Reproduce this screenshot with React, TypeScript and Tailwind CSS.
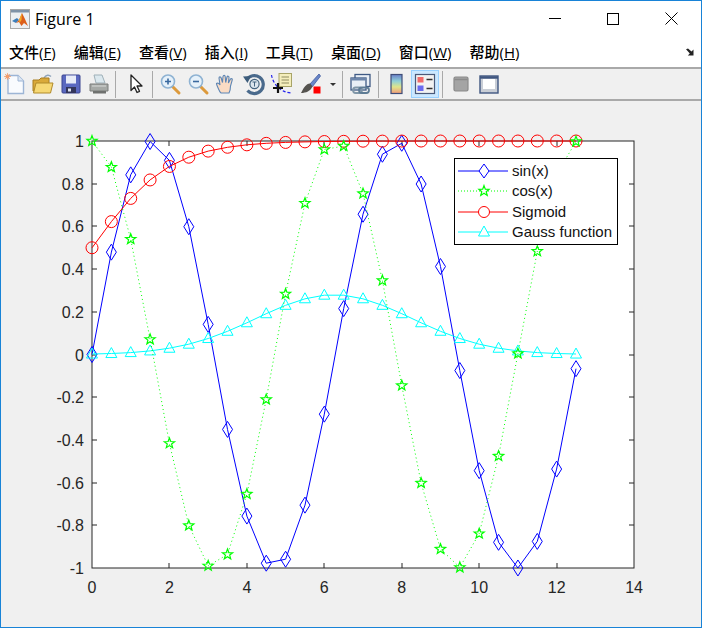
import React from "react";

const xs = Array.from({ length: 26 }, (_, i) => i * 0.5);
const px = (v: number) => 92 + v * 38.72;
const py = (v: number) => 354.5 - v * 213.5;

const series = {
  sin: xs.map((x) => [px(x), py(Math.sin(x))]),
  cos: xs.map((x) => [px(x), py(Math.cos(x))]),
  sigmoid: xs.map((x) => [px(x), py(1 / (1 + Math.exp(-x)))]),
  gauss: xs.map((x) => [px(x), py(0.28 * Math.exp(-((x - 6.25) ** 2) / 8))]),
};

const toLine = (pts: number[][]) => pts.map((p) => p[0].toFixed(1) + "," + p[1].toFixed(1)).join(" ");

const starPoints = (cx: number, cy: number, r = 5.4) =>
  Array.from({ length: 10 }, (_, i) => {
    const a = -Math.PI / 2 + (i * Math.PI) / 5;
    const rr = i % 2 ? r * 0.42 : r;
    return (cx + rr * Math.cos(a)).toFixed(1) + "," + (cy + rr * Math.sin(a)).toFixed(1);
  }).join(" ");

function Diamond({ x, y }: { x: number; y: number }) {
  return <polygon points={`${x},${y - 8} ${x + 5},${y} ${x},${y + 8} ${x - 5},${y}`} fill="none" stroke="#0000ff" strokeWidth="1" />;
}
function Triangle({ x, y }: { x: number; y: number }) {
  return <polygon points={`${x},${y - 6} ${x + 5.5},${y + 4} ${x - 5.5},${y + 4}`} fill="none" stroke="#00ffff" strokeWidth="1" />;
}

const menus: [string, string][] = [
  ["文件", "F"],
  ["编辑", "E"],
  ["查看", "V"],
  ["插入", "I"],
  ["工具", "T"],
  ["桌面", "D"],
  ["窗口", "W"],
  ["帮助", "H"],
];

function Sep() {
  return <div className="w-px h-[27px] bg-[#a9a9a9] mx-[2px]" />;
}

function Btn({ children, active }: { children: React.ReactNode; active?: boolean }) {
  return (
    <div className={"w-[28px] h-[28px] flex items-center justify-center border " + (active ? "bg-[#cce8ff] border-[#99d1ff]" : "border-transparent")}>
      {children}
    </div>
  );
}

function Ico({ children }: { children: React.ReactNode }) {
  return (
    <svg width="24" height="24" viewBox="0 0 24 24">
      {children}
    </svg>
  );
}

function MatlabLogo() {
  return (
    <svg width="20" height="20" viewBox="0 0 20 20">
      <rect x="0.5" y="0.5" width="19" height="19" fill="#eceff2" stroke="#a8a8a8" />
      <rect x="1" y="1" width="18" height="2.5" fill="#7f93a8" />
      <polygon points="2,12 7,9 9,11 6,14" fill="#3c7db8" />
      <polygon points="6,14 9,11 12,4 14.5,9 18,17 14,14 11.5,17 9,13" fill="#dd5f1a" />
      <polygon points="9,11 12,4 11.5,11 9.5,14" fill="#f4ab28" />
    </svg>
  );
}

function Lens({ minus }: { minus?: boolean }) {
  return (
    <Ico>
      <line x1="14" y1="14" x2="21" y2="21" stroke="#dd9a3c" strokeWidth="3" strokeLinecap="round" />
      <circle cx="10" cy="9.5" r="6.5" fill="#e6f1fa" stroke="#8fb3d3" strokeWidth="1.6" />
      <path d={minus ? "M7 9.5h6" : "M7 9.5h6M10 6.5v6"} stroke="#39699f" strokeWidth="1.6" />
    </Ico>
  );
}

export default function App() {
  return (
    <div className="w-[702px] h-[628px] flex flex-col overflow-hidden border border-[#1883d7] bg-white font-['Liberation_Sans',sans-serif]">
      <div className="h-[35px] shrink-0 flex items-center pl-[9px] pr-px">
        <MatlabLogo />
        <span className="ml-[5px] text-[16px] text-black font-['Open_Sans',sans-serif]">Figure 1</span>
        <div className="ml-auto flex items-center h-full">
          <div className="w-[58px] flex justify-center">
            <div className="w-[12px] h-px bg-black" />
          </div>
          <div className="w-[58px] flex justify-center">
            <div className="w-[12px] h-[12px] border border-black" />
          </div>
          <div className="w-[58px] flex justify-center">
            <svg width="13" height="13" viewBox="0 0 13 13">
              <path d="M0.5 0.5L12.5 12.5M12.5 0.5L0.5 12.5" stroke="#000" strokeWidth="1" fill="none" />
            </svg>
          </div>
        </div>
      </div>

      <div className="h-[31px] shrink-0 flex items-center gap-[18px] pt-px pl-[8px] pr-[6px] text-[15px] text-black font-['Open_Sans','Noto_Sans_CJK_SC',sans-serif] font-medium">
        {menus.map(([name, key]) => (
          <span key={key} className="whitespace-nowrap">
            <span className="font-['Noto_Sans_CJK_SC',sans-serif]">{name}</span>(<span className="underline">{key}</span>)
          </span>
        ))}
        <svg className="ml-auto" width="9" height="8" viewBox="0 0 9 8">
          <path d="M0 1.2L2 0.5L5.5 3.5L7.5 1.5V7.5H1.8L3.8 5.5Z" fill="#222" />
        </svg>
      </div>

      <div className="h-[34px] shrink-0 flex items-center bg-[#f0f0f0] border-y-2 border-[#a9a9a9]">
        <Btn>
          <Ico>
            <path d="M5 3.5H15L20.5 9V21.5H5Z" fill="#f9fbfe" stroke="#9db5d5" strokeWidth="1.4" />
            <path d="M15 3.5V9H20.5" fill="#dde7f3" stroke="#9db5d5" />
            <circle cx="4.5" cy="4.5" r="2" fill="#f08a50" />
            <path d="M1 4.5h7M4.5 1v7M2 2l5 5M7 2l-5 5" stroke="#f2a070" strokeWidth="0.8" />
          </Ico>
        </Btn>
        <Btn>
          <Ico>
            <path d="M13 6C15 2.5 18 2.5 20 4.5" stroke="#8fa5bd" strokeWidth="1.5" fill="none" />
            <path d="M2 8H8L10 6H18V19H2Z" fill="#d9a93a" stroke="#a97e20" />
            <path d="M2.5 21L5 11H22L19.5 21Z" fill="#f6d874" stroke="#b08a2a" />
          </Ico>
        </Btn>
        <Btn>
          <Ico>
            <rect x="3" y="3" width="18" height="18" rx="1" fill="#5a68c0" stroke="#3a4590" />
            <rect x="7" y="3.5" width="10" height="8" fill="#e8ecf8" />
            <rect x="7" y="15" width="10" height="6" fill="#33365c" />
            <rect x="9" y="16.5" width="3" height="3" fill="#dfe3f0" />
          </Ico>
        </Btn>
        <Btn>
          <Ico>
            <path d="M7 3H15L18 11H9Z" fill="#dbe8ee" stroke="#9fb0b8" />
            <path d="M3 12H21V19H3Z" fill="#a6a9a6" stroke="#7a7c7a" />
            <path d="M6 19H19V21.5H6Z" fill="#6f716f" />
            <path d="M5 14h14" stroke="#d8dad8" />
          </Ico>
        </Btn>
        <Sep />
        <div className="w-[4px]" />
        <Btn>
          <Ico>
            <path d="M7 3V18.5L10.5 15L13 20.5L15.5 19.3L13 14H18Z" fill="#fff" stroke="#222" strokeWidth="1.3" strokeLinejoin="round" />
          </Ico>
        </Btn>
        <Sep />
        <div className="w-px" />
        <Btn>
          <Lens />
        </Btn>
        <Btn>
          <Lens minus />
        </Btn>
        <Btn>
          <Ico>
            <path
              d="M6 20C4 16 2.5 13 2.5 11.5C3.5 10.5 5 11.5 6 13L5 6C5 4.5 6.8 4.5 7.2 6L8.5 10.5L9 4.5C9.3 3 11 3 11.2 4.5L11.7 10.5L13 5C13.5 3.7 15 4 15 5.5L14.4 11L16.5 7C17.5 6 18.7 7 18.2 8L16.5 14C16.5 17 16 19 15 21H7Z"
              fill="#fbdcc4"
              stroke="#5d86b5"
              strokeWidth="1.1"
            />
          </Ico>
        </Btn>
        <Btn>
          <Ico>
            <path d="M4.5 8A9 9 0 1 1 5.5 18.5" stroke="#4a6a8c" strokeWidth="3.2" fill="none" />
            <path d="M1 4.5L9 4L5.5 11Z" fill="#3d5d7c" />
            <circle cx="12.5" cy="12" r="4.6" fill="#dce6ee" stroke="#44647f" strokeWidth="1.2" />
            <path d="M10.5 10h4M12.5 10v4.5" stroke="#44647f" />
          </Ico>
        </Btn>
        <Btn>
          <Ico>
            <path d="M1.5 3C3 12 10 20 21 21" stroke="#2222ee" strokeWidth="1.2" strokeDasharray="3 2" fill="none" />
            <rect x="9" y="1.5" width="12.5" height="13" fill="#f4eebc" stroke="#a8a468" />
            <path d="M11.5 5h7.5M11.5 8h7.5M11.5 11h7.5" stroke="#8f8c60" />
            <path d="M8 11V21M3 16H13" stroke="#111" strokeWidth="2.2" />
          </Ico>
        </Btn>
        <Btn>
          <Ico>
            <path d="M21 2L12 12L14.5 14.5L22.5 4Z" fill="#6a86c8" stroke="#3f5aa0" strokeWidth="0.8" />
            <path d="M12 11.5C8 12 6 15 3 21C8 21 12.5 19 14.5 14.5Z" fill="#55534f" />
            <rect x="15.5" y="14.5" width="7" height="7" fill="#ff0000" />
          </Ico>
        </Btn>
        <div className="w-[15px] ml-px flex justify-center">
          <div className="w-0 h-0 border-x-[3px] border-x-transparent border-t-[3px] border-t-[#333]" />
        </div>
        <Sep />
        <div className="w-px" />
        <Btn>
          <Ico>
            <rect x="7" y="2.5" width="15" height="12" fill="#e9eff6" stroke="#3f5a85" strokeWidth="1.3" />
            <rect x="3" y="6" width="15" height="12" fill="#e9eff6" stroke="#3f5a85" strokeWidth="1.3" />
            <path d="M3 6h15v2.5h-15z" fill="#6d86ab" />
            <rect x="5" y="15.5" width="9" height="5.5" rx="2.7" fill="none" stroke="#8197a8" strokeWidth="1.8" />
            <rect x="11" y="15.5" width="10" height="5.5" rx="2.7" fill="none" stroke="#5e7c95" strokeWidth="1.8" />
          </Ico>
        </Btn>
        <div className="w-[2px]" />
        <Sep />
        <div className="w-[2px]" />
        <Btn>
          <Ico>
            <defs>
              <linearGradient id="cb" x1="0" y1="0" x2="0" y2="1">
                <stop offset="0" stopColor="#6a7fc8" />
                <stop offset="0.35" stopColor="#8fd0d8" />
                <stop offset="0.65" stopColor="#dfe58a" />
                <stop offset="1" stopColor="#f09a7a" />
              </linearGradient>
            </defs>
            <rect x="6" y="2.5" width="11" height="19" fill="url(#cb)" stroke="#3f4d78" strokeWidth="1.2" />
          </Ico>
        </Btn>
        <Btn active>
          <Ico>
            <rect x="2.5" y="2.5" width="19" height="19" fill="#f2f2f2" stroke="#4a5a7a" strokeWidth="1.2" />
            <rect x="4.5" y="5" width="6" height="5.5" fill="#f06a6a" />
            <rect x="4.5" y="13.5" width="6" height="5.5" fill="#6a6af0" />
            <path d="M13.5 7.5h6M13.5 16.5h6" stroke="#333" strokeWidth="1.4" />
          </Ico>
        </Btn>
        <div className="w-px" />
        <Sep />
        <div className="w-[2px]" />
        <Btn>
          <Ico>
            <rect x="5" y="5" width="14" height="14" rx="1.5" fill="#a4a4a4" stroke="#8a8a8a" strokeWidth="1.2" />
            <path d="M5.5 7.5h13" stroke="#8b8b8b" strokeWidth="1.5" />
          </Ico>
        </Btn>
        <Btn>
          <Ico>
            <rect x="3" y="4" width="18" height="17" fill="#c9ced6" stroke="#3f5680" strokeWidth="1.4" />
            <rect x="6" y="7" width="12" height="10" fill="#fff" />
            <path d="M3 5.5h18" stroke="#3f5680" strokeWidth="2.4" />
          </Ico>
        </Btn>
      </div>

      <div className="relative flex-1 bg-[#f0f0f0]">
        <svg className="block w-full h-full" viewBox="1 101 700 526">
          <rect x="92" y="141" width="542" height="427" fill="#fff" />
          {[2, 4, 6, 8, 10, 12].map((t) => (
            <path key={t} d={`M${px(t).toFixed(0)} 568v-5M${px(t).toFixed(0)} 141v5`} stroke="#262626" />
          ))}
          {[-0.8, -0.6, -0.4, -0.2, 0, 0.2, 0.4, 0.6, 0.8].map((t) => (
            <path key={t} d={`M92 ${py(t).toFixed(0)}h5M634 ${py(t).toFixed(0)}h-5`} stroke="#262626" />
          ))}
          <rect x="92" y="141" width="542" height="427" fill="none" stroke="#262626" />

          <polyline points={toLine(series.sin)} fill="none" stroke="#0000ff" strokeWidth="1" />
          {series.sin.map((p, i) => (
            <Diamond key={i} x={p[0]} y={p[1]} />
          ))}
          <polyline points={toLine(series.sigmoid)} fill="none" stroke="#ff0000" strokeWidth="1" />
          {series.sigmoid.map((p, i) => (
            <circle key={i} cx={p[0]} cy={p[1]} r="6" fill="none" stroke="#ff0000" />
          ))}
          <polyline points={toLine(series.gauss)} fill="none" stroke="#00ffff" strokeWidth="1" />
          {series.gauss.map((p, i) => (
            <Triangle key={i} x={p[0]} y={p[1]} />
          ))}
          <polyline points={toLine(series.cos)} fill="none" stroke="#00ff00" strokeWidth="1" strokeDasharray="1 3" />
          {series.cos.map((p, i) => (
            <polygon key={i} points={starPoints(p[0], p[1])} fill="none" stroke="#00ff00" strokeWidth="1.2" />
          ))}

          {[0, 2, 4, 6, 8, 10, 12, 14].map((t) => (
            <text key={t} x={px(t)} y="593" fontSize="16" fill="#262626" textAnchor="middle">
              {t}
            </text>
          ))}
          {[1, 0.8, 0.6, 0.4, 0.2, 0, -0.2, -0.4, -0.6, -0.8, -1].map((t) => (
            <text key={t} x="84" y={py(t) + 6} fontSize="16" fill="#262626" textAnchor="end">
              {t}
            </text>
          ))}
        </svg>

        <div className="absolute left-[453px] top-[57px] w-[164px] h-[87px] bg-white border border-black flex flex-col justify-center text-[15px] leading-[20.5px] text-[#111]">
          {[
            { label: "sin(x)", kind: "sin" },
            { label: "cos(x)", kind: "cos" },
            { label: "Sigmoid", kind: "sig" },
            { label: "Gauss function", kind: "gauss" },
          ].map((row) => (
            <div key={row.kind} className="flex items-center h-[20.5px] pl-[3px]">
              <svg width="51" height="20" viewBox="0 0 51 20" className="shrink-0">
                {row.kind === "sin" && (
                  <>
                    <line x1="0" y1="10" x2="50" y2="10" stroke="#0000ff" />
                    <polygon points="26,3 31,10 26,17 21,10" fill="#fff" stroke="#0000ff" />
                  </>
                )}
                {row.kind === "cos" && (
                  <>
                    <line x1="0" y1="10" x2="50" y2="10" stroke="#00ff00" strokeDasharray="1 2" />
                    <polygon points={starPoints(26, 10)} fill="#fff" stroke="#00ff00" strokeWidth="1.2" />
                  </>
                )}
                {row.kind === "sig" && (
                  <>
                    <line x1="0" y1="10" x2="50" y2="10" stroke="#ff0000" />
                    <circle cx="26" cy="10" r="5.5" fill="#fff" stroke="#ff0000" />
                  </>
                )}
                {row.kind === "gauss" && (
                  <>
                    <line x1="0" y1="10" x2="50" y2="10" stroke="#00ffff" />
                    <polygon points="26,4 31.5,14 20.5,14" fill="#fff" stroke="#00ffff" />
                  </>
                )}
              </svg>
              <span className="ml-[3px] whitespace-nowrap">{row.label}</span>
            </div>
          ))}
        </div>
      </div>
    </div>
  );
}
